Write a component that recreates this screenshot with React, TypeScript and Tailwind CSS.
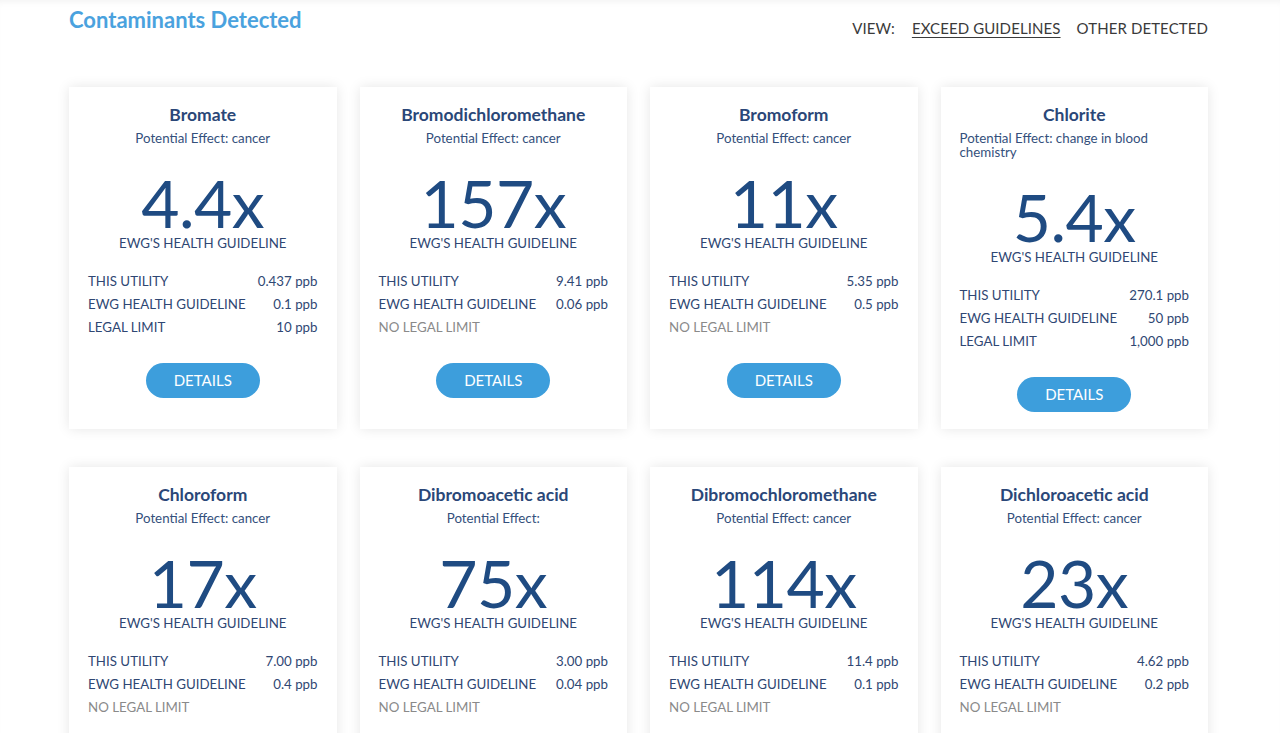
import React from "react";

type Item = {
  name: string;
  effect: string;
  mult: string;
  utility: string;
  guideline: string;
  legal: string | null;
};

const row1: Item[] = [
  { name: "Bromate", effect: "Potential Effect: cancer", mult: "4.4x", utility: "0.437 ppb", guideline: "0.1 ppb", legal: "10 ppb" },
  { name: "Bromodichloromethane", effect: "Potential Effect: cancer", mult: "157x", utility: "9.41 ppb", guideline: "0.06 ppb", legal: null },
  { name: "Bromoform", effect: "Potential Effect: cancer", mult: "11x", utility: "5.35 ppb", guideline: "0.5 ppb", legal: null },
  { name: "Chlorite", effect: "Potential Effect: change in blood chemistry", mult: "5.4x", utility: "270.1 ppb", guideline: "50 ppb", legal: "1,000 ppb" },
];

const row2: Item[] = [
  { name: "Chloroform", effect: "Potential Effect: cancer", mult: "17x", utility: "7.00 ppb", guideline: "0.4 ppb", legal: null },
  { name: "Dibromoacetic acid", effect: "Potential Effect:", mult: "75x", utility: "3.00 ppb", guideline: "0.04 ppb", legal: null },
  { name: "Dibromochloromethane", effect: "Potential Effect: cancer", mult: "114x", utility: "11.4 ppb", guideline: "0.1 ppb", legal: null },
  { name: "Dichloroacetic acid", effect: "Potential Effect: cancer", mult: "23x", utility: "4.62 ppb", guideline: "0.2 ppb", legal: null },
];

function Card({ it }: { it: Item }) {
  return (
    <div className="bg-white shadow-[0_0_12px_rgba(0,0,0,0.10)] px-[19px] pt-[18px] pb-[17px] flex flex-col items-center text-center">
      <div className="text-[17.5px] leading-[20px] font-bold text-[#2a4778]">{it.name}</div>
      <div className="mt-[6px] w-full text-center text-[13.3px] leading-[14px]">
        <span className="inline-block align-top text-left text-[#34507c]">{it.effect}</span>
      </div>
      <div className="mt-[32px] text-[66px] leading-[52px] text-[#1f4b82] font-normal tracking-[-0.5px]">{it.mult}</div>
      <div className="mt-[6px] text-[13.3px] leading-[16px] text-[#2f4773] uppercase">EWG's Health Guideline</div>
      <div className="mt-[19px] w-full text-[13.3px] leading-[23px] text-[#2f4773]">
        <div className="flex justify-between">
          <span>THIS UTILITY</span>
          <span>{it.utility}</span>
        </div>
        <div className="flex justify-between">
          <span>EWG HEALTH GUIDELINE</span>
          <span>{it.guideline}</span>
        </div>
        {it.legal ? (
          <div className="flex justify-between">
            <span>LEGAL LIMIT</span>
            <span>{it.legal}</span>
          </div>
        ) : (
          <div className="flex justify-between text-[#8a8a8a]">
            <span>NO LEGAL LIMIT</span>
          </div>
        )}
      </div>
      <button className="mt-[24px] w-[114px] h-[35px] rounded-full bg-[#3d9edc] text-white text-[15px] uppercase">
        Details
      </button>
    </div>
  );
}

export default function App() {
  return (
    <div
      className="min-h-[733px] bg-white shadow-[inset_0_6px_6px_-4px_rgba(0,0,0,0.05)]"
      style={{ fontFamily: "Lato, 'Liberation Sans', sans-serif" }}
    >
      <div className="ml-[69px] w-[1139px]">
        <div className="flex items-start justify-between pt-[7px]">
          <h2 className="text-[22px] leading-[26px] font-bold text-[#4aa2de]">Contaminants Detected</h2>
          <div className="flex items-center pt-[11px] text-[15px] leading-[20px] tracking-[0.1px] text-[#3a3a3a] uppercase">
            <span>View:</span>
            <span className="ml-[17px] underline underline-offset-[3px]">Exceed Guidelines</span>
            <span className="ml-[16px]">Other Detected</span>
          </div>
        </div>
        <div className="mt-[49px] grid grid-cols-4 gap-x-[23px] gap-y-[38px]">
          {row1.map((it) => (
            <Card key={it.name} it={it} />
          ))}
          {row2.map((it) => (
            <Card key={it.name} it={it} />
          ))}
        </div>
      </div>
    </div>
  );
}
